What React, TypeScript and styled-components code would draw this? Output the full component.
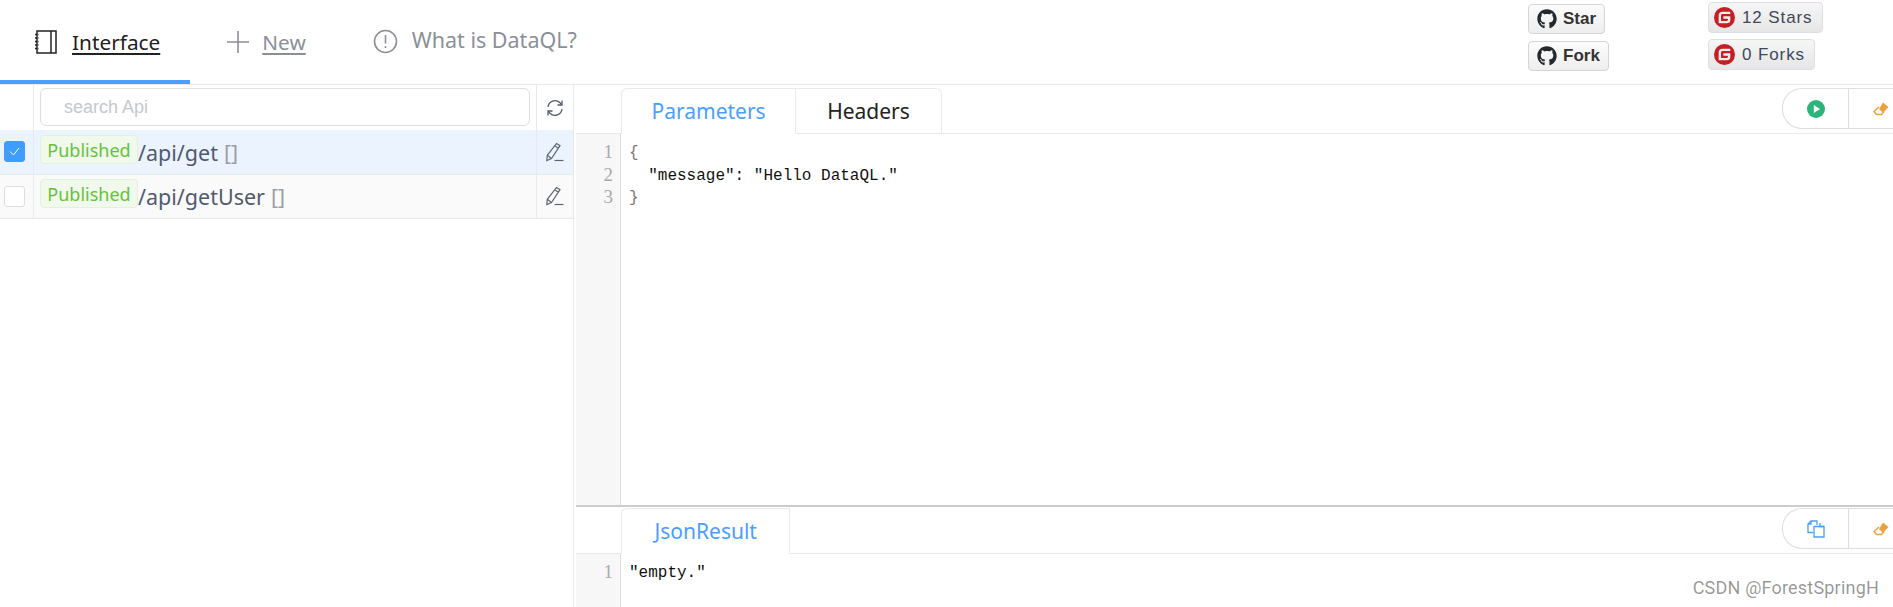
import React, { FC } from 'react'
import styled, { createGlobalStyle } from 'styled-components'
import { FaGithub } from 'react-icons/fa'
import { SiGitee } from 'react-icons/si'

const GlobalStyle = createGlobalStyle`
  html, body {
    margin: 0;
    height: 100%;
    background: #fff;
    font-family: "Noto Sans", "Open Sans", sans-serif;
    overflow: hidden;
  }
  #root { height: 100%; }
  * { box-sizing: border-box; }
`

const apis = [
  { path: '/api/get', active: true },
  { path: '/api/getUser', active: false },
]

const BookIcon = () => (
  <svg width="24" height="24" viewBox="0 0 24 24" fill="none" stroke="#222" strokeWidth="1.500">
    <rect x="3" y="1" width="19" height="22" />
    <path d="M17 1v22" />
    <path d="M1 4.500h3.500M1 8h3.500M1 11.500h3.500M1 15h3.500M1 18.500h3.500" strokeDasharray="2 1" />
  </svg>
)

const PlusIcon = () => (
  <svg width="24" height="24" viewBox="0 0 24 24" fill="none" stroke="#8c8f97" strokeWidth="1.600">
    <path d="M12 1v22M1 12h22" />
  </svg>
)

const InfoIcon = () => (
  <svg width="25" height="25" viewBox="0 0 25 25" fill="none" stroke="#8c8f97" strokeWidth="1.600">
    <circle cx="12.500" cy="12.500" r="11" />
    <path d="M12.500 6v8.500M12.500 17v2" />
  </svg>
)

const RefreshIcon = () => (
  <svg width="18" height="18" viewBox="0 0 18 18" fill="none" stroke="#515a6e" strokeWidth="1.300">
    <path d="M2 8a7 7 0 0 1 12-4.200L15.500 5.500M16 10a7 7 0 0 1-12 4.200L2.500 12.500" />
    <path d="M16 1.500v4.500h-4.500M2 16.500V12h4.500" />
  </svg>
)

const PencilIcon = () => (
  <svg width="20" height="20" viewBox="0 0 20 20" fill="none" stroke="#5f6673" strokeWidth="1.200">
    <path d="M11.500 1.500l3.500 2.200L6.500 16.500l-4.700 2 .5-5.200zM2.300 13.300l4.200 3.200M10 4l3.600 2.300" />
    <path d="M9.500 18.500h9" />
  </svg>
)

const PlayIcon = () => (
  <svg width="18" height="18" viewBox="0 0 18 18">
    <circle cx="9" cy="9" r="9" fill="#2db47d" />
    <path d="M6.800 5v8L13 9z" fill="#fff" />
  </svg>
)

const EraserIcon = () => (
  <svg width="16" height="14" viewBox="0 0 16 14">
    <path d="M10 .500L15.500 5 10 11 6 7z" fill="#e8a33f" />
    <path d="M6 5L1 9.500 3.500 12.500H8.500L11 9.500" fill="none" stroke="#e8a33f" strokeWidth="1.400" />
  </svg>
)

const CopyIcon = () => (
  <svg width="18" height="18" viewBox="0 0 18 18" fill="none" stroke="#4a9eff" strokeWidth="1.300">
    <path d="M10 5V1H4L1 4v8.500h5" />
    <path d="M4 1v3H1" />
    <path d="M7 6.500h6l4 0V17H7z" />
    <path d="M13 3v3.500h4" />
  </svg>
)

const CheckIcon = () => (
  <svg width="13" height="13" viewBox="0 0 13 13" fill="none" stroke="#fff" strokeWidth="1">
    <path d="M2 6.500l3.500 3.500L11 3" />
  </svg>
)

const Tag: FC = () => <TagBox>Published</TagBox>

const ApiRow: FC<{ path: string; active: boolean }> = ({ path, active }) => (
  <Row $active={active}>
    <CheckCell>
      <CheckBox $checked={active}>{active && <CheckIcon />}</CheckBox>
    </CheckCell>
    <PathCell>
      <Tag />
      <PathText>{path}</PathText>
      <Brackets>[]</Brackets>
    </PathCell>
    <IconCell>
      <PencilIcon />
    </IconCell>
  </Row>
)

export default function App() {
  return (
    <Page>
      <GlobalStyle />
      <Header>
        <Nav>
          <NavItem $active>
            <BookIcon />
            <NavLink $active>Interface</NavLink>
          </NavItem>
          <NavItem>
            <PlusIcon />
            <NavLink>New</NavLink>
          </NavItem>
          <InfoItem>
            <InfoIcon />
            <NavPlain>What is DataQL?</NavPlain>
          </InfoItem>
        </Nav>
        <Badges>
          <BadgeColumn>
            <GithubButton>
              <FaGithub size={20} color="#24292e" />
              Star
            </GithubButton>
            <GithubButton>
              <FaGithub size={20} color="#24292e" />
              Fork
            </GithubButton>
          </BadgeColumn>
          <GiteeColumn>
            <GiteeButton>
              <SiGitee size={21} color="#c71d23" />
              12 Stars
            </GiteeButton>
            <GiteeButton>
              <SiGitee size={21} color="#c71d23" />
              0 Forks
            </GiteeButton>
          </GiteeColumn>
        </Badges>
      </Header>
      <Main>
        <ListPanel>
          <SearchRow>
            <CheckCell />
            <SearchCell>
              <SearchInput placeholder="search Api" />
            </SearchCell>
            <IconCell>
              <RefreshIcon />
            </IconCell>
          </SearchRow>
          {apis.map(api => (
            <ApiRow key={api.path} path={api.path} active={api.active} />
          ))}
        </ListPanel>
        <RightPanel>
          <RequestPane>
            <TabBar $height={49} $top={3}>
              <Tabs>
                <Tab $active $pad={29.5}>
                  Parameters
                </Tab>
                <Tab $pad={31}>Headers</Tab>
              </Tabs>
              <ToolGroup>
                <ToolButton>
                  <PlayIcon />
                </ToolButton>
                <ToolButton>
                  <EraserIcon />
                </ToolButton>
              </ToolGroup>
            </TabBar>
            <Editor>
              <Gutter>
                <div>1</div>
                <div>2</div>
                <div>3</div>
              </Gutter>
              <Code>
                <div>
                  <Brace>{'{'}</Brace>
                </div>
                <div>{'  "message": "Hello DataQL."'}</div>
                <div>
                  <Brace>{'}'}</Brace>
                </div>
              </Code>
            </Editor>
          </RequestPane>
          <Splitter />
          <ResultPane>
            <TabBar $height={47} $top={1}>
              <Tabs>
                <Tab $active $pad={32.5}>
                  JsonResult
                </Tab>
              </Tabs>
              <ToolGroup>
                <ToolButton>
                  <CopyIcon />
                </ToolButton>
                <ToolButton>
                  <EraserIcon />
                </ToolButton>
              </ToolGroup>
            </TabBar>
            <Editor>
              <Gutter>
                <div>1</div>
              </Gutter>
              <Code>
                <div>"empty."</div>
              </Code>
            </Editor>
          </ResultPane>
        </RightPanel>
      </Main>
      <Watermark>CSDN @ForestSpringH</Watermark>
    </Page>
  )
}

const Page = styled.div`
  position: relative;
  height: 607px;
  width: 1893px;
  display: flex;
  flex-direction: column;
  overflow: hidden;
`

const Header = styled.header`
  height: 85px;
  flex: none;
  display: flex;
  justify-content: space-between;
  border-bottom: 1px solid #e8eaec;
`

const Nav = styled.nav`
  display: flex;
  gap: 7px;
  height: 84px;
`

const NavItem = styled.div<{ $active?: boolean }>`
  display: flex;
  align-items: center;
  gap: ${p => (p.$active ? '14px' : '12px')};
  padding: 3px 30px 0 ${p => (p.$active ? '34px' : '29px')};
  height: 84px;
  border-bottom: 4px solid ${p => (p.$active ? '#4a9eff' : 'transparent')};
`

const InfoItem = styled(NavItem)`
  gap: 14px;
  padding-left: 30px;
`

const NavLink = styled.span<{ $active?: boolean }>`
  font-size: 20.800px;
  line-height: 24px;
  color: ${p => (p.$active ? '#222' : '#8c8f97')};
  text-decoration: underline;
  text-underline-offset: 3px;
`

const NavPlain = styled.span`
  font-size: 21.500px;
  line-height: 24px;
  color: #8c8f97;
  margin-bottom: 4px;
`

const Badges = styled.div`
  display: grid;
  grid-template-columns: 180px 185px;
`

const BadgeColumn = styled.div`
  display: flex;
  flex-direction: column;
  align-items: flex-start;
  gap: 7px;
  padding-top: 4px;
`

const GiteeColumn = styled(BadgeColumn)`
  gap: 6px;
  padding-top: 2px;
`

const GithubButton = styled.div`
  height: 30px;
  display: flex;
  align-items: center;
  gap: 6px;
  padding: 0 8px;
  font: bold 17px "Liberation Sans", sans-serif;
  color: #333;
  background: linear-gradient(#fcfcfc, #eeeeee);
  border: 1px solid #d5d5d5;
  border-radius: 4px;
`

const GiteeButton = styled.div`
  height: 31px;
  display: flex;
  align-items: center;
  gap: 7px;
  padding: 0 9px 0 5px;
  font: 17px "Liberation Sans", sans-serif;
  letter-spacing: 0.900px;
  color: #40485b;
  background: linear-gradient(#f6f6f6, #e6e6e6);
  border: 1px solid #dcdfe6;
  border-radius: 4px;
`

const Main = styled.main`
  flex: 1;
  min-height: 0;
  display: flex;
`

const ListPanel = styled.section`
  width: 574px;
  flex: none;
  border-right: 1px solid #e8eaec;
  display: flex;
  flex-direction: column;
`

const SearchRow = styled.div`
  height: 45px;
  flex: none;
  display: grid;
  grid-template-columns: 34px 1fr 37px;
`

const Row = styled.div<{ $active: boolean }>`
  height: 44.500px;
  flex: none;
  display: grid;
  grid-template-columns: 34px 1fr 37px;
  background: ${p => (p.$active ? '#ebf3fe' : '#fafafa')};
  border-bottom: 1px solid #e8eaec;
`

const CheckCell = styled.div`
  display: flex;
  align-items: center;
  padding-left: 4px;
  border-right: 1px solid #e8eaec;
`

const CheckBox = styled.div<{ $checked: boolean }>`
  width: 21px;
  height: 21px;
  border-radius: 3px;
  display: flex;
  align-items: center;
  justify-content: center;
  background: ${p => (p.$checked ? '#3f9dfd' : '#fff')};
  border: 1px solid ${p => (p.$checked ? '#3f9dfd' : '#dcdee2')};
`

const PathCell = styled.div`
  display: flex;
  align-items: center;
  padding-left: 6px;
  font-size: 21.500px;
  color: #515a6e;
  white-space: pre;
`

const PathText = styled.span`
  margin-top: 1px;
`

const Brackets = styled(PathText)`
  color: #9a9ea8;
  margin-left: 6px;
`

const TagBox = styled.span`
  width: 98px;
  height: 29px;
  margin-top: -5px;
  text-align: center;
  font-size: 18px;
  line-height: 28px;
  color: #67c23a;
  background: #f0f9eb;
  border: 1px solid #e1f3d8;
  border-radius: 4px;
`

const SearchCell = styled.div`
  padding: 3px 6px 0;
`

const SearchInput = styled.input`
  width: 100%;
  height: 38px;
  padding: 0 23px;
  font: 18px "Liberation Sans", sans-serif;
  border: 1px solid #dcdee2;
  border-radius: 6px;
  outline: none;
  &::placeholder {
    color: #c5c8ce;
    opacity: 1;
  }
`

const IconCell = styled.div`
  display: flex;
  align-items: center;
  justify-content: center;
  border-left: 1px solid #e8eaec;
`

const RightPanel = styled.section`
  flex: 1;
  min-width: 0;
  display: flex;
  flex-direction: column;
  padding-left: 2px;
`

const RequestPane = styled.div`
  height: 420px;
  flex: none;
  display: flex;
  flex-direction: column;
`

const ResultPane = styled.div`
  flex: 1;
  min-height: 0;
  display: flex;
  flex-direction: column;
`

const Splitter = styled.div`
  height: 2px;
  flex: none;
  background: #ccc;
`

const TabBar = styled.div<{ $height: number; $top: number }>`
  height: ${p => p.$height}px;
  flex: none;
  display: flex;
  align-items: flex-start;
  justify-content: space-between;
  padding: ${p => p.$top}px 0 0 45px;
  border-bottom: 1px solid #e8eaec;
`

const Tabs = styled.div`
  display: flex;
  height: 46px;
`

const Tab = styled.div<{ $active?: boolean; $pad: number }>`
  height: 46px;
  padding: 0 ${p => p.$pad}px;
  font-size: 21px;
  line-height: 45px;
  color: ${p => (p.$active ? '#4a9eff' : '#222')};
  background: #fff;
  border: 1px solid #e8eaec;
  border-left-width: ${p => (p.$active ? '1px' : '0')};
  border-bottom-color: ${p => (p.$active ? '#fff' : '#e8eaec')};
  border-radius: ${p => (p.$active ? '6px 0 0 0' : '0 6px 0 0')};
`

const ToolGroup = styled.div`
  display: flex;
  height: 41px;
  flex: none;
  margin-right: -20px;
  border: 1px solid #dcdee2;
  border-right: none;
  border-radius: 20px 0 0 20px;
`

const ToolButton = styled.div`
  width: 65px;
  display: flex;
  align-items: center;
  justify-content: center;
  & + & {
    border-left: 1px solid #dcdee2;
  }
`

const Editor = styled.div`
  flex: 1;
  min-height: 0;
  display: flex;
`

const Gutter = styled.div`
  width: 45px;
  flex: none;
  padding: 7px 7px 0 0;
  text-align: right;
  font: 19px/22.500px "Liberation Serif", serif;
  color: #aaa;
  background: #f7f7f7;
  border-right: 1px solid #ddd;
`

const Code = styled.pre`
  margin: 0;
  padding: 8px 0 0 8px;
  font: 16px/22.500px "Liberation Mono", monospace;
  color: #111;
`

const Brace = styled.span`
  color: #777;
`

const Watermark = styled.div`
  position: absolute;
  right: 14px;
  bottom: 9px;
  font: 18px Roboto, sans-serif;
  color: rgba(0, 0, 0, 0.42);
  letter-spacing: 0.200px;
`
